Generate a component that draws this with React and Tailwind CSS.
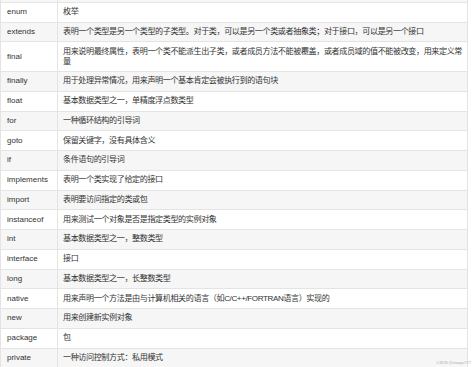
import React from "react";

const rows = [
  ["else", "用在条件语句中，表明当条件不成立时的分支"],
  ["enum", "枚举"],
  ["extends", "表明一个类型是另一个类型的子类型。对于类，可以是另一个类或者抽象类；对于接口，可以是另一个接口"],
  ["final", "用来说明最终属性，表明一个类不能派生出子类，或者成员方法不能被覆盖，或者成员域的值不能被改变，用来定义常量"],
  ["finally", "用于处理异常情况，用来声明一个基本肯定会被执行到的语句块"],
  ["float", "基本数据类型之一，单精度浮点数类型"],
  ["for", "一种循环结构的引导词"],
  ["goto", "保留关键字，没有具体含义"],
  ["if", "条件语句的引导词"],
  ["implements", "表明一个类实现了给定的接口"],
  ["import", "表明要访问指定的类或包"],
  ["instanceof", "用来测试一个对象是否是指定类型的实例对象"],
  ["int", "基本数据类型之一，整数类型"],
  ["interface", "接口"],
  ["long", "基本数据类型之一，长整数类型"],
  ["native", "用来声明一个方法是由与计算机相关的语言（如C/C++/FORTRAN语言）实现的"],
  ["new", "用来创建新实例对象"],
  ["package", "包"],
  ["private", "一种访问控制方式：私用模式"],
  ["protected", "一种访问控制方式：保护模式"],
];

export default function App() {
  return (
    <div
      className="relative h-[367px] w-[474px] overflow-hidden bg-white text-[#333333]"
      style={{ fontFamily: '"Liberation Sans", "Noto Sans CJK SC", sans-serif' }}
    >
      <div className="mt-[-17px] w-[468px] border-l border-r border-[#e4e4e4]">
        {rows.map(([k, v], i) => (
          <div
            key={k}
            className={
              "flex border-b border-[#e4e4e4] " + (i % 2 === 0 ? "bg-[#f6f6f6]" : "bg-white")
            }
          >
            <div className="flex w-[57px] shrink-0 items-center border-r border-[#e4e4e4] pl-[6px] text-[8px] leading-[10px]">
              {k}
            </div>
            <div className="flex-1 py-[4.375px] pl-[5px] pr-[1px] text-[8.1px] leading-[10px] tracking-[-0.42px]">
              {v}
            </div>
          </div>
        ))}
      </div>
      <div className="absolute bottom-[2px] right-[3px] text-[4px] leading-[4px] text-[#b0b0b0]">
        CSDN @xiaoyu777
      </div>
    </div>
  );
}
